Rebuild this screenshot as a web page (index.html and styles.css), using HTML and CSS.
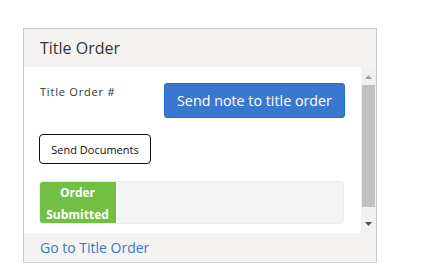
FILE: index.html
```html
<!DOCTYPE html>
<html>
<head>
<meta charset="utf-8">
<link rel="stylesheet" href="styles.css">
</head>
<body>
<div class="panel">
  <div class="panel-heading">Title Order</div>
  <div class="panel-body">
    <div class="viewport">
      <div class="inner">
        <div class="row">
          <div class="label">Title Order #</div>
          <button class="btn-primary">Send note to title order</button>
        </div>
        <button class="btn-outline">Send Documents</button>
        <div class="progress">
          <div class="progress-bar">Order<br>Submitted</div>
        </div>
      </div>
    </div>
    <div class="scrollbar">
      <svg class="arrow-up" width="15" height="18" viewBox="0 0 15 18"><polygon points="4,12 11,12 7.5,8" fill="#a3a3a3"/></svg>
      <div class="thumb"></div>
      <div class="track-rest"></div>
      <svg class="arrow-down" width="15" height="17" viewBox="0 0 15 17"><polygon points="4,6 11,6 7.5,10" fill="#505050"/></svg>
    </div>
  </div>
  <div class="panel-footer"><a class="link" href="#">Go to Title Order</a></div>
</div>
</body>
</html>
```
FILE: styles.css
```css
html, body {
  margin: 0;
  padding: 0;
  background: #fff;
}
body {
  font-family: "Open Sans", "Noto Sans", sans-serif;
  color: #333;
  padding: 28px 0 0 23px;
}
.panel {
  width: 352px;
  border: 1px solid #ccc;
  background: #f4f3f2;
}
.panel-heading {
  height: 38px;
  box-sizing: border-box;
  padding: 8px 16px 0 16px;
  font-size: 16px;
  line-height: 22px;
  color: #333;
}
.panel-body {
  height: 166px;
  display: flex;
  background: #fff;
}
.viewport {
  flex: 1;
  overflow: hidden;
}
.scrollbar {
  width: 15px;
  background: #f1f1f1;
  display: flex;
  flex-direction: column;
}
.scrollbar svg {
  display: block;
}
.thumb {
  height: 122px;
  margin: 0 1px 0 1px;
  background: #c1c1c1;
}
.track-rest {
  flex: 1;
}
.inner {
  padding: 16px 16px 25px 15px;
  display: flex;
  flex-direction: column;
  align-items: flex-start;
}
.row {
  width: 100%;
  display: flex;
  justify-content: space-between;
  align-items: flex-start;
}
.label {
  font-size: 11px;
  font-weight: 500;
  letter-spacing: 0.8px;
  line-height: 16px;
  padding-top: 1px;
  padding-left: 1px;
}
.btn-primary {
  width: 181px;
  height: 35px;
  border: 1px solid #1f6fd8;
  border-radius: 3px;
  background: #3a78cf;
  color: #fff;
  font-family: inherit;
  font-size: 14.3px;
  padding: 0;
}
.btn-outline {
  margin-top: 16px;
  width: 112px;
  height: 30px;
  border: 1px solid #111;
  border-radius: 4px;
  background: #fff;
  color: #111;
  font-family: inherit;
  font-size: 11px;
  padding: 0;
}
.progress {
  margin-top: 17px;
  width: 305px;
  height: 43px;
  box-sizing: border-box;
  background: #f4f4f4;
  border: 1px solid #ececec;
  border-radius: 4px;
  overflow: hidden;
  display: flex;
}
.progress-bar {
  width: 77px;
  margin: -1px 0 -1px -1px;
  background: #72bf44;
  color: #fff;
  font-size: 12px;
  font-weight: 700;
  line-height: 22px;
  text-align: center;
  padding-top: 1px;
}
.panel-footer {
  height: 29px;
  box-sizing: border-box;
  padding: 5px 16px 0 16px;
  font-size: 14px;
  line-height: 20px;
}
.link {
  color: #3a77c9;
  text-decoration: none;
}
```
